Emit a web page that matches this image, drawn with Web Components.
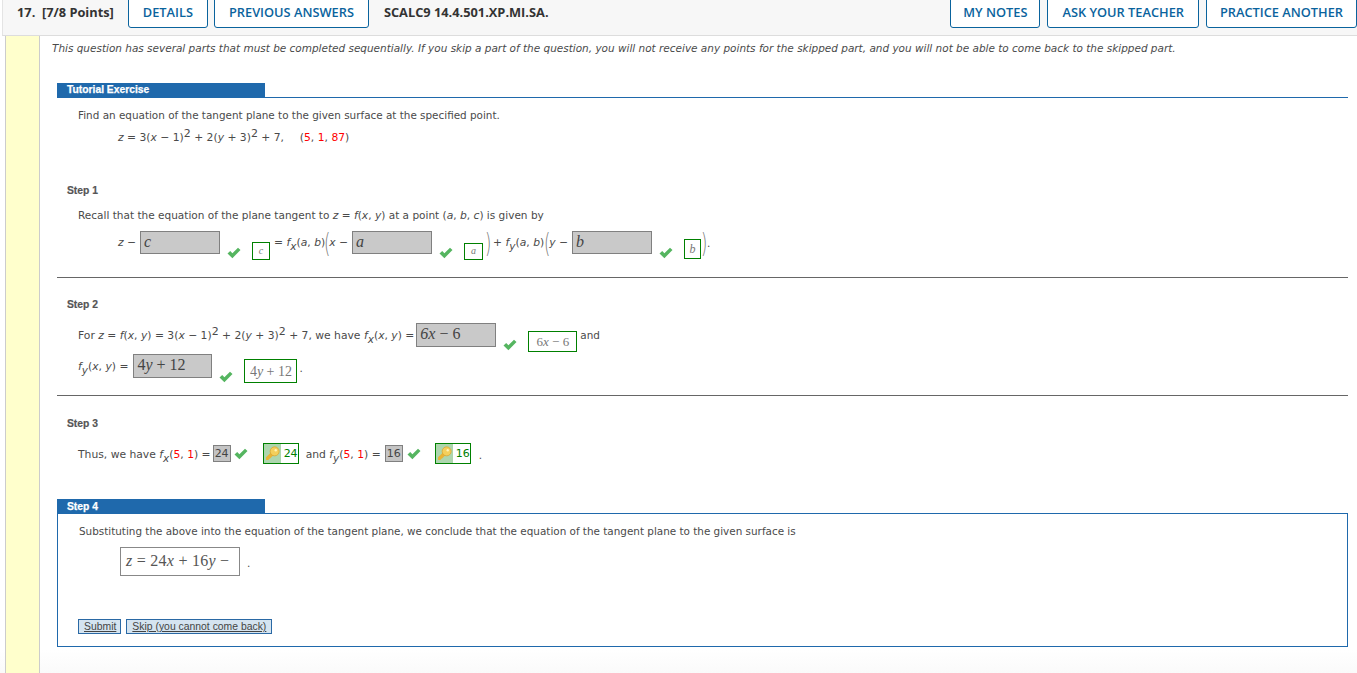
<!DOCTYPE html>
<html lang="en"><head><meta charset="utf-8"><title>Tangent plane</title>
<style>
html,body{margin:0;padding:0;height:673px;overflow:hidden;background:#fff}
body{font:10.42px/16px "DejaVu Sans",Verdana,sans-serif;color:#4a4a4a}
i{font-style:oblique}
.r{color:#f00}
.m{font-size:10.75px}
sup{font-size:11px;line-height:0;vertical-align:baseline;position:relative;top:-4px}
sub{font-size:10.5px;line-height:0;vertical-align:baseline;position:relative;top:4px;font-style:oblique}
.t{display:block;white-space:pre;flex:none;height:14px}
.p{font:200 27px/30px "DejaVu Sans",sans-serif;color:#777;display:block;flex:none;transform:scaleX(.6);width:10px;text-align:center}
</style></head><body>
<template id="tpl-check"><style>:host{display:block;flex:none;width:14px;height:12px}svg{display:block}</style><svg width="14" height="12" viewBox="0 0 14 12"><path d="M0.5 6.5 L3.2 4 L5.4 6.2 L11 0.8 L13.5 3 L5.4 11.2 Z" fill="#55b560"/></svg></template>
<template id="tpl-key"><style>
:host{display:flex;flex:none;height:19px;border:1px solid #008000;color:#008000;font:11px/19px "DejaVu Sans",sans-serif;background:#fff}
.k{width:17px;background:#aed6ae;display:flex;align-items:center;justify-content:center}
.v{padding:0 0 0 3px}
</style><div class="k"><svg width="15" height="15" viewBox="0 0 14 14"><path d="M1 13 L1 10.5 L6 5.5 L8.5 8 L4.5 12 L3.5 12 L3.5 13 Z" fill="#e8b436"/><circle cx="9" cy="5" r="4.2" fill="#f4cf5c" stroke="#d9a42e" stroke-width=".7"/><circle cx="10" cy="4" r="1.1" fill="#fff3b8"/></svg></div><div class="v"><slot></slot></div></template>
<script>
const mk=(name,css,html)=>customElements.define(name,class extends HTMLElement{constructor(){super();this.attachShadow({mode:'open'}).innerHTML='<style>'+css+'</style>'+html}});
const tpl=(name,id)=>customElements.define(name,class extends HTMLElement{constructor(){super();this.attachShadow({mode:'open'}).appendChild(document.getElementById(id).content.cloneNode(true))}});
tpl('hw-check','tpl-check');tpl('hw-key','tpl-key');
mk('hw-page',':host{display:block;height:673px;background:linear-gradient(#fff 650px,#fafafa)}','<slot></slot>');
mk('hw-header',':host{display:flex;box-sizing:border-box;height:36px;margin-left:2px;background:#f7f7f7;border-bottom:1px solid #ddd;border-left:1px solid #e4e4e4;font:700 12.8px/24px "Open Sans",sans-serif;color:#333;padding-left:14px}::slotted([slot=right]){margin-left:auto;display:flex}div{display:flex;flex:1;min-width:0}','<div><slot></slot><slot name="right"></slot></div>');
mk('hw-btn',':host{display:block;flex:none;box-sizing:border-box;height:29px;margin-top:-1px;padding:var(--pad,0 14px);border:1px solid #0a639d;border-radius:0 0 3px 3px;background:#fff;color:#0a639d;font:600 12.8px/24px "Open Sans",sans-serif;white-space:pre}','<slot></slot>');
mk('hw-body',':host{display:flex;height:637px}.y{flex:none;box-sizing:border-box;width:35px;margin-left:5px;background:#ffc;border-left:1px solid #ccc;border-right:1px solid #ccc}.m{flex:1;min-width:0;padding-right:9px;box-sizing:border-box}','<div class="y"></div><div class="m"><slot></slot></div>');
mk('hw-intro',':host{display:block;height:14px;margin:4px 0 0 12px;font-size:10.48px;font-style:oblique;white-space:pre}','<slot></slot>');
mk('hw-bar',':host{display:block;height:15px;margin:var(--mt,0) 0 0 17px;border-bottom:1px solid #1f69ac;box-sizing:border-box}div{width:208px;height:14px;box-sizing:border-box;background:#1f69ac;padding:var(--pt,0) 0 0 10px;color:#fff;font:700 10.3px/14px "Liberation Sans",Arial,sans-serif;-webkit-text-stroke:.25px #fff}','<div><slot></slot></div>');
mk('hw-row',':host{display:flex;margin:var(--mt,0) 0 0 var(--ml,38px);height:var(--h,14px);align-items:flex-start;white-space:pre}','<slot></slot>');
mk('hw-step',':host{display:block;height:14px;margin:var(--mt,0) 0 0 27px;font:700 10.3px/16px "Liberation Sans",Arial,sans-serif;color:#555;-webkit-text-stroke:.2px #555}','<slot></slot>');
mk('hw-rule',':host{display:block;height:1px;margin:var(--mt,0) 0 0 17px;background:#666}','');
mk('hw-input',':host{display:block;flex:none;box-sizing:border-box;width:var(--w,80px);height:var(--ih,24px);border:1px solid #808080;background:#c9c9c9;color:#444;padding-left:3px;font:16px/20px "Liberation Serif",serif}','<slot></slot>');
mk('hw-small',':host{display:block;flex:none;box-sizing:border-box;height:17px;border:1px solid #808080;background:#c4c4c4;color:#444;padding:0 1px;font:11px/15px "DejaVu Sans",sans-serif}','<slot></slot>');
mk('hw-ans',':host{display:block;flex:none;box-sizing:border-box;text-align:center;width:var(--w,18px);height:var(--ih,18px);border:1px solid #008000;background:#fff;color:#777;font:var(--fs,10px)/var(--lh,15px) "Liberation Serif",serif}','<slot></slot>');
mk('hw-panel',':host{display:block;box-sizing:border-box;height:133px;margin-left:17px;border:1px solid #1f69ac;border-top:0;padding:9px 0 0 21px}','<slot></slot>');
mk('hw-formula',':host{display:block;flex:none;box-sizing:border-box;width:120px;height:29px;border:1px solid #888;padding:0 0 0 5px;color:#555;letter-spacing:.25px;font:16px/26px "Liberation Serif",serif}','<slot></slot>');
mk('hw-submit',':host{display:block;flex:none;box-sizing:border-box;height:15px;border:1px solid #2a69a5;background:#d5e4f0;padding:var(--pad,0 5px);color:#444;font:10.4px/13px "Liberation Sans",Arial,sans-serif;text-decoration:underline}','<slot></slot>');
</script>
<hw-page>
<hw-header>
<span class="t" style="height:24px;margin-right:14px">17.&nbsp; [7/8 Points]</span>
<hw-btn style="margin-right:6px">DETAILS</hw-btn>
<hw-btn style="margin-right:15px">PREVIOUS ANSWERS</hw-btn>
<span class="t" style="height:24px">SCALC9 14.4.501.XP.MI.SA.</span>
<span slot="right"><hw-btn style="--pad:0 12px;margin-right:7px">MY NOTES</hw-btn><hw-btn style="margin-right:7px">ASK YOUR TEACHER</hw-btn><hw-btn style="--pad:0 13px">PRACTICE ANOTHER</hw-btn></span>
</hw-header>
<hw-body>
<hw-intro>This question has several parts that must be completed sequentially. If you skip a part of the question, you will not receive any points for the skipped part, and you will not be able to come back to the skipped part.</hw-intro>
<hw-bar style="--mt:29px">Tutorial Exercise</hw-bar>
<hw-row style="--mt:9px">Find an equation of the tangent plane to the given surface at the specified point.</hw-row>
<hw-row style="--mt:9px;--ml:78px"><span class="t m"><i>z</i> = 3(<i>x</i> − 1)<sup>2</sup> + 2(<i>y</i> + 3)<sup>2</sup> + 7,&nbsp;&nbsp;&nbsp;&thinsp; (<span class="r">5</span>, <span class="r">1</span>, <span class="r">87</span>)</span></hw-row>
<hw-step style="--mt:39px">Step 1</hw-step>
<hw-row style="--mt:10px"><span class="t" style="font-size:10.52px">Recall that the equation of the plane tangent to <i class="m">z</i> = <i class="m">f</i>(<i class="m">x</i>, <i class="m">y</i>) at a point (<i class="m">a</i>, <i class="m">b</i>, <i class="m">c</i>) is given by</span></hw-row>
<hw-row style="--mt:10px;--ml:78px;--h:30px">
<span class="t m" style="margin:4px 4px 0 0"><i>z</i> −</span>
<hw-input style="--ih:23px"><i>c</i></hw-input>
<hw-check style="margin:16px 0 0 7px"></hw-check>
<hw-ans style="margin:11px 0 0 11px;--lh:15px"><i>c</i></hw-ans>
<span class="t m" style="margin:4px 0 0 4px">= <i>f</i><sub>x</sub>(<i>a</i>, <i>b</i>)</span>
<span class="p" style="margin:-3px -3px 0 -3px">(</span>
<span class="t m" style="margin:4px 4px 0 0"><i>x</i> −</span>
<hw-input style="--ih:23px"><i>a</i></hw-input>
<hw-check style="margin:16px 0 0 7px"></hw-check>
<hw-ans style="margin:12px 0 0 11px;--w:19px;--ih:17px;--lh:14px"><i>a</i></hw-ans>
<span class="p" style="margin-top:-3px">)</span>
<span class="t m" style="margin:4px 4px 0 0">+ <i>f</i><sub>y</sub>(<i>a</i>, <i>b</i>)</span>
<span class="p" style="margin:-3px -3px 0 -6px">(</span>
<span class="t m" style="margin:4px 4px 0 0"><i>y</i> −</span>
<hw-input style="--ih:23px"><i>b</i></hw-input>
<hw-check style="margin:16px 0 0 7px"></hw-check>
<hw-ans style="margin:8px 0 0 11px;--w:17px;--ih:20px;--fs:12px;--lh:18px"><i>b</i></hw-ans>
<span class="p" style="margin:-3px 0 0 -2px">)</span>
<span class="t" style="margin:4px 0 0 -2px">.</span>
</hw-row>
<hw-rule style="--mt:16px"></hw-rule>
<hw-step style="--mt:19px">Step 2</hw-step>
<hw-row style="--mt:12px;--h:30px">
<span class="t m" style="margin:5px 2px 0 0">For <i>z</i> = <i>f</i>(<i>x</i>, <i>y</i>) = 3(<i>x</i> − 1)<sup>2</sup> + 2(<i>y</i> + 3)<sup>2</sup> + 7, we have <i>f</i><sub>x</sub>(<i>x</i>, <i>y</i>) =</span>
<hw-input><i>6x</i> − 6</hw-input>
<hw-check style="margin:16px 0 0 7px"></hw-check>
<hw-ans style="margin:8px 0 0 11px;--w:49px;--ih:21px;--fs:13px;--lh:20px">6<i>x</i> − 6</hw-ans>
<span class="t" style="margin:4px 0 0 3px">and</span>
</hw-row>
<hw-row style="--mt:1px;--h:30px">
<span class="t m" style="margin:5px 5px 0 0"><i>f</i><sub>y</sub>(<i>x</i>, <i>y</i>) =</span>
<hw-input style="--w:79px">4<i>y</i> + 12</hw-input>
<hw-check style="margin:17px 0 0 7px"></hw-check>
<hw-ans style="margin:5px 0 0 11px;--w:53px;--ih:24px;--fs:14px;--lh:23px">4<i>y</i> + 12</hw-ans>
<span class="t" style="margin:6px 0 0 2px">.</span>
</hw-row>
<hw-rule style="--mt:11px"></hw-rule>
<hw-step style="--mt:20px">Step 3</hw-step>
<hw-row style="--mt:13px;--h:22px">
<span class="t m" style="margin:4px 2px 0 0">Thus, we have <i>f</i><sub>x</sub>(<span class="r">5</span>, <span class="r">1</span>) =</span>
<hw-small style="margin-top:2px">24</hw-small>
<hw-check style="margin:5px 0 0 3px"></hw-check>
<hw-key style="margin-left:15px">24</hw-key>
<span class="t m" style="margin:4px 4px 0 7px">and <i>f</i><sub>y</sub>(<span class="r">5</span>, <span class="r">1</span>) =</span>
<hw-small style="margin-top:2px">16</hw-small>
<hw-check style="margin:5px 0 0 4px"></hw-check>
<hw-key style="margin-left:14px">16</hw-key>
<span class="t" style="margin:4px 0 0 8px">.</span>
</hw-row>
<hw-bar style="--mt:34px;--pt:1px">Step 4</hw-bar>
<hw-panel>
<span class="t">Substituting the above into the equation of the tangent plane, we conclude that the equation of the tangent plane to the given surface is</span>
<hw-row style="--mt:10px;--ml:41px;--h:29px">
<hw-formula><i>z</i> = 24<i>x</i> + 16<i>y</i> −</hw-formula>
<span class="t" style="margin:8px 0 0 7px">.</span>
</hw-row>
<hw-row style="--mt:43px;--ml:-1px;--h:15px">
<hw-submit style="--pad:0 4px 0 5px">Submit</hw-submit>
<hw-submit style="margin-left:5px">Skip (you cannot come back)</hw-submit>
</hw-row>
</hw-panel>
</hw-body>
</hw-page>
</body></html>
